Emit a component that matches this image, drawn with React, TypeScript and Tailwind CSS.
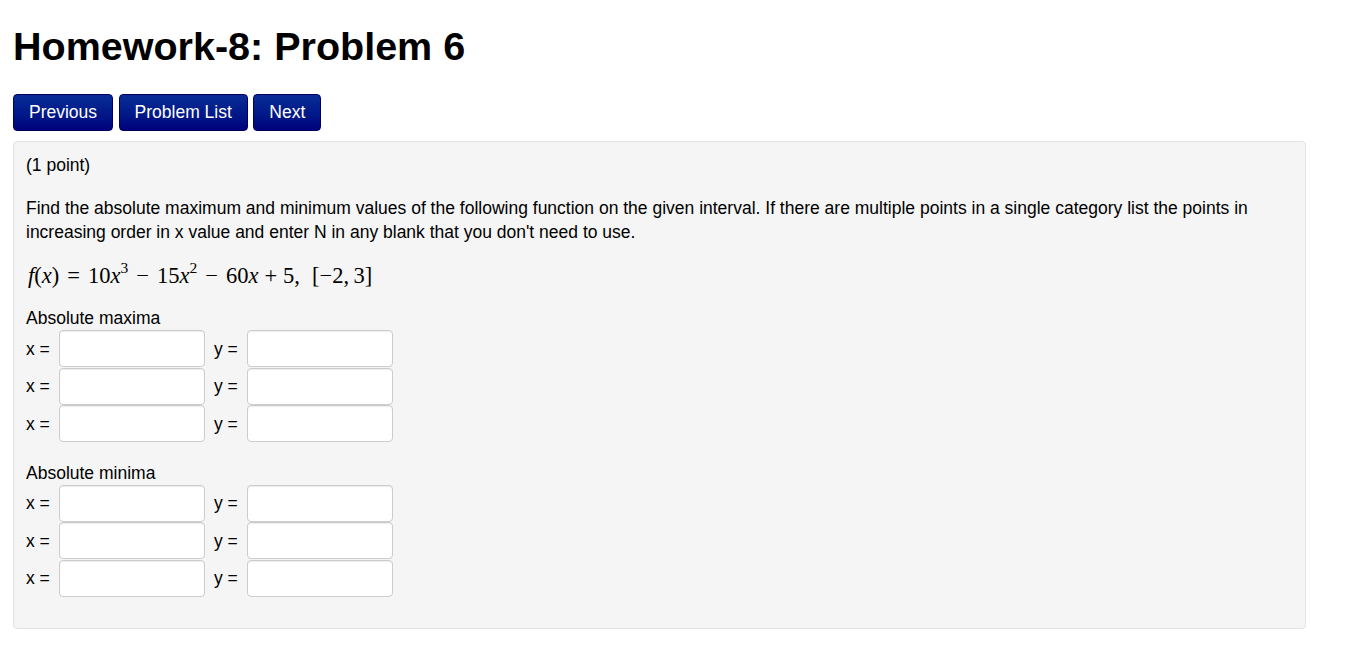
import React from 'react';

const FIELDS = [0, 1, 2];

function AnswerRow() {
  return (
    <div className="flex h-[37.5px] items-center">
      <span className="w-[33px]">x =</span>
      <input
        type="text"
        className="h-[37px] w-[146px] rounded-[4px] border border-[#cccccc] bg-white shadow-[inset_0_1px_1px_rgba(0,0,0,0.075)] outline-none"
      />
      <span className="ml-[9px] w-[33px]">y =</span>
      <input
        type="text"
        className="h-[37px] w-[146px] rounded-[4px] border border-[#cccccc] bg-white shadow-[inset_0_1px_1px_rgba(0,0,0,0.075)] outline-none"
      />
    </div>
  );
}

function NavButton({ label }: { label: string }) {
  return (
    <button className="h-[37px] rounded-[4px] border border-[#00005c] bg-gradient-to-b from-[#0b2c97] to-[#00007c] px-[15px] text-[17.5px] text-white">
      {label}
    </button>
  );
}

export default function App() {
  return (
    <div className="min-h-screen bg-white px-[13px] pt-[22px] text-black [font-family:'Liberation_Sans',Arial,sans-serif]">
      <h1 className="text-[39.5px] font-bold leading-[48px]">Homework-8: Problem 6</h1>

      <div className="mt-[24px] flex gap-[5.5px]">
        <NavButton label="Previous" />
        <NavButton label="Problem List" />
        <NavButton label="Next" />
      </div>

      <div className="mt-[10px] w-[1293px] rounded-[4px] border border-[#e3e3e3] bg-[#f5f5f5] px-[12px] pt-[11px] pb-[31px] text-[17.5px] leading-[24px]">
        <p>(1 point)</p>
        <p className="mt-[19px]">
          Find the absolute maximum and minimum values of the following function on the given interval. If there are
          multiple points in a single category list the points in increasing order in x value and enter N in any blank
          that you don't need to use.
        </p>

        <div className="mt-[17px] flex h-[30px] items-center pl-[2px] text-[22.5px] leading-[30px] [font-family:'Liberation_Serif','DejaVu_Serif',serif]">
          <i>f</i>(<i>x</i>)<span className="mx-[8px]">=</span>10<i>x</i>
          <sup className="text-[15.5px]">3</sup>
          <span className="mx-[8px]">−</span>15<i>x</i>
          <sup className="text-[15.5px]">2</sup>
          <span className="mx-[8px]">−</span>60<i>x</i>
          <span className="mx-[6px]">+</span>5,
          <span className="ml-[12px]">[−2,&thinsp;3]</span>
        </div>

        <p className="mt-[15px]">Absolute maxima</p>
        {FIELDS.map((i) => (
          <AnswerRow key={`max-${i}`} />
        ))}

        <p className="mt-[18px]">Absolute minima</p>
        {FIELDS.map((i) => (
          <AnswerRow key={`min-${i}`} />
        ))}
      </div>
    </div>
  );
}
